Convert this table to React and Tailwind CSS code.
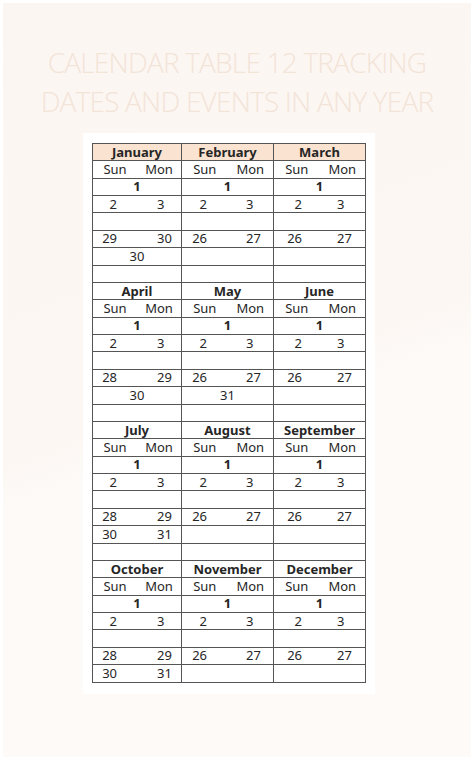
import React from "react";

const quarters = [
  {
    months: ["January", "February", "March"],
    tail: [
      [["29", "30"], ["26", "27"], ["26", "27"]],
      ["30", null, null],
    ],
    peach: true,
    last: false,
  },
  {
    months: ["April", "May", "June"],
    tail: [
      [["28", "29"], ["26", "27"], ["26", "27"]],
      ["30", "31", null],
    ],
    last: false,
  },
  {
    months: ["July", "August", "September"],
    tail: [
      [["28", "29"], ["26", "27"], ["26", "27"]],
      [["30", "31"], null, null],
    ],
    last: false,
  },
  {
    months: ["October", "November", "December"],
    tail: [
      [["28", "29"], ["26", "27"], ["26", "27"]],
      [["30", "31"], null, null],
    ],
    last: true,
  },
];

const leftW = ["w-[24px]", "w-[25px]", "w-[28px]"];
const gapW = ["w-[40px]", "w-[39px]", "w-[35px]"];

function Cell({ value, bold, bg, kind, col }) {
  const base =
    "h-[17.375px] border-b border-r border-[#555555] flex items-center text-[13px] leading-none text-[#262626] " +
    (bg ? "bg-[#fbe3d1] " : "bg-white ");
  if (Array.isArray(value) && kind === "days") {
    return (
      <div className={base}>
        <span className="flex-1 text-center">{value[0]}</span>
        <span className="flex-1 text-center">{value[1]}</span>
      </div>
    );
  }
  if (Array.isArray(value)) {
    return (
      <div className={base}>
        <span className={leftW[col] + " shrink-0 text-right"}>{value[0]}</span>
        <span className={gapW[col] + " shrink-0"} />
        <span className="text-left">{value[1]}</span>
      </div>
    );
  }
  return (
    <div className={base + "justify-center " + (bold ? "font-bold" : "")}>
      {value}
    </div>
  );
}

export default function App() {
  const rows = [];
  quarters.forEach((q) => {
    rows.push(q.months.map((m) => ({ v: m, bold: true, bg: q.peach })));
    rows.push(q.months.map(() => ({ v: ["Sun", "Mon"], kind: "days" })));
    rows.push(q.months.map(() => ({ v: "1", bold: true })));
    rows.push(q.months.map(() => ({ v: ["2", "3"] })));
    rows.push(q.months.map(() => ({ v: null })));
    q.tail.forEach((t) => rows.push(t.map((v) => ({ v }))));
    if (!q.last) rows.push(q.months.map(() => ({ v: null })));
  });

  return (
    <div
      className="w-[474px] h-[760px] bg-white p-[3px] overflow-hidden"
      style={{ fontFamily: '"Noto Sans", "Open Sans", sans-serif' }}
    >
      <div className="h-full bg-[linear-gradient(160deg,#fcf6f2_0%,#fcf7f3_50%,#fdfaf7_55%,#fdfaf7_100%)] pt-[40px]">
        <h1
          className="text-center text-[28px] font-light leading-[38.7px] tracking-[-0.8px] text-[#f3e4d8]"
          style={{ fontFamily: '"Open Sans", "Noto Sans", sans-serif' }}
        >
          CALENDAR TABLE 12 TRACKING
          <br />
          DATES AND EVENTS IN ANY YEAR
        </h1>
        <div className="ml-[80px] mt-[13px] w-[292px] bg-white pl-[9px] pt-[9.5px] pb-[11px]">
          <div className="grid w-[274px] grid-cols-[89px_92px_92px] border-l border-t border-[#555555]">
            {rows.map((r, ri) =>
              r.map((c, ci) => (
                <Cell
                  key={ri + "-" + ci}
                  value={c.v}
                  bold={c.bold}
                  bg={c.bg}
                  kind={c.kind}
                  col={ci}
                />
              ))
            )}
          </div>
        </div>
      </div>
    </div>
  );
}
